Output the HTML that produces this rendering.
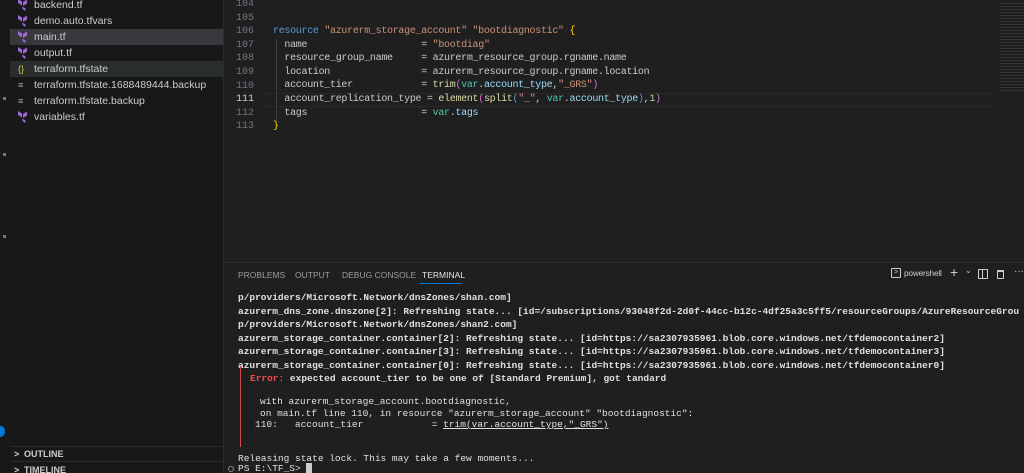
<!DOCTYPE html>
<html><head><meta charset="utf-8"><style>
*{margin:0;padding:0;box-sizing:border-box}
html,body{width:1024px;height:473px;overflow:hidden}
body{background:#1f1f1f;position:relative;font-family:"Liberation Sans",sans-serif}
.abs{position:absolute;white-space:pre}
#act{left:0;top:0;width:10px;height:473px;background:#181818}
#side{left:10px;top:0;width:214px;height:473px;background:#181818;border-right:1px solid #2b2b2b}
.f{position:absolute;left:0;width:213px;height:16px;font-size:10.5px;color:#cccccc;line-height:16px}
.f span{position:absolute;left:24px}
.f i{position:absolute;left:8px;top:2px;font-style:normal}
.tf{width:11px;height:12px}
.code{font-family:"Liberation Mono",monospace;font-size:10px;letter-spacing:-0.3px;line-height:13.6px;color:#cccccc}
.ln{color:#6e7681;text-align:right;width:30px;left:224px;letter-spacing:0}
.k{color:#569cd6}.s{color:#ce9178}.fn{color:#dcdcaa}.v{color:#9cdcfe}.t{color:#4ec9b0}.b{color:#ffd700}.b2{color:#da70d6}.n{color:#b5cea8}
.term{font-family:"Liberation Mono",monospace;font-size:9.5px;line-height:13.6px;color:#e0e0e0;font-weight:bold}
.tab{font-size:8.5px;color:#9d9d9d;top:270px}
</style></head><body>
<div id="act" class="abs"></div>
<div class="abs" style="left:-4px;top:426px;width:9px;height:11px;border-radius:50%;background:#0078d4"></div>
<div class="abs" style="left:3px;top:97px;width:3px;height:3px;background:#777"></div>
<div class="abs" style="left:3px;top:153px;width:3px;height:3px;background:#777"></div>
<div class="abs" style="left:3px;top:235px;width:3px;height:3px;background:#777"></div>
<div id="side" class="abs">
 <div class="f" style="top:-3px"><i><svg class="tf" viewBox="0 0 11 12"><path d="M0 0l4 2.5v4L0 4zM5 3l4 -2.5v4L5 7zM4.5 7.5l3 2v2.5l-3-2z" fill="#9b6ad6"/></svg></i><span>backend.tf</span></div>
 <div class="f" style="top:13px"><i><svg class="tf" viewBox="0 0 11 12"><path d="M0 0l4 2.5v4L0 4zM5 3l4 -2.5v4L5 7zM4.5 7.5l3 2v2.5l-3-2z" fill="#9b6ad6"/></svg></i><span>demo.auto.tfvars</span></div>
 <div class="f" style="top:29px;background:#37373d"><i><svg class="tf" viewBox="0 0 11 12"><path d="M0 0l4 2.5v4L0 4zM5 3l4 -2.5v4L5 7zM4.5 7.5l3 2v2.5l-3-2z" fill="#9b6ad6"/></svg></i><span>main.tf</span></div>
 <div class="f" style="top:45px"><i><svg class="tf" viewBox="0 0 11 12"><path d="M0 0l4 2.5v4L0 4zM5 3l4 -2.5v4L5 7zM4.5 7.5l3 2v2.5l-3-2z" fill="#9b6ad6"/></svg></i><span>output.tf</span></div>
 <div class="f" style="top:61px;background:#2a2d2e"><i style="color:#cbcb41;font-size:9px;top:0">{}</i><span>terraform.tfstate</span></div>
 <div class="f" style="top:77px"><i style="color:#aaa;font-size:9px;top:0">≡</i><span>terraform.tfstate.1688489444.backup</span></div>
 <div class="f" style="top:93px"><i style="color:#aaa;font-size:9px;top:0">≡</i><span>terraform.tfstate.backup</span></div>
 <div class="f" style="top:109px"><i><svg class="tf" viewBox="0 0 11 12"><path d="M0 0l4 2.5v4L0 4zM5 3l4 -2.5v4L5 7zM4.5 7.5l3 2v2.5l-3-2z" fill="#9b6ad6"/></svg></i><span>variables.tf</span></div>
 <div class="abs" style="left:0;top:446px;width:213px;height:1px;background:#2b2b2b"></div>
 <div class="f" style="top:446px;font-weight:bold;font-size:9px"><i style="left:4px;top:0;color:#ccc">&gt;</i><span style="left:14px">OUTLINE</span></div>
 <div class="abs" style="left:0;top:461px;width:213px;height:1px;background:#2b2b2b"></div>
 <div class="f" style="top:462px;font-weight:bold;font-size:9px"><i style="left:4px;top:0;color:#ccc">&gt;</i><span style="left:14px">TIMELINE</span></div>
</div>
<div class="abs" style="left:262px;top:93px;width:735px;height:14px;border-top:1px solid #282828;border-bottom:1px solid #282828"></div>
<div class="abs" style="left:1000px;top:3px;width:24px;height:90px;opacity:.4;background:repeating-linear-gradient(#555 0 1px,transparent 1px 3px)"></div>
<div class="abs code ln" style="top:-2px">104
105
106
107
108
109
110
<span style="color:#ccc">111</span>
112
113</div>
<div class="abs" style="left:276px;top:39px;width:1px;height:80px;background:#404040"></div>
<div class="abs code" style="left:273px;top:25px"><span class="k">resource</span> <span class="s">"azurerm_storage_account"</span> <span class="s">"bootdiagnostic"</span> <span class="b">{</span>
  name                    = <span class="s">"bootdiag"</span>
  resource_group_name     = azurerm_resource_group.rgname.name
  location                = azurerm_resource_group.rgname.location
  account_tier            = <span class="fn">trim</span><span class="b2">(</span><span class="t">var</span>.<span class="v">account_type</span>,<span class="s">"_GRS"</span><span class="b2">)</span>
  account_replication_type = <span class="fn">element</span><span class="b2">(</span><span class="fn">split</span><span class="k">(</span><span class="s">"_"</span>, <span class="t">var</span>.<span class="v">account_type</span><span class="k">)</span>,<span class="n">1</span><span class="b2">)</span>
  tags                    = <span class="t">var</span>.<span class="v">tags</span>
<span class="b">}</span></div>
<div class="abs" style="left:224px;top:262px;width:800px;height:1px;background:#2b2b2b"></div>
<div class="abs tab" style="left:238px">PROBLEMS</div>
<div class="abs tab" style="left:295px">OUTPUT</div>
<div class="abs tab" style="left:342px">DEBUG CONSOLE</div>
<div class="abs tab" style="left:422px;color:#e7e7e7">TERMINAL</div>
<div class="abs" style="left:420px;top:283px;width:42px;height:1px;background:#0078d4"></div>
<div class="abs" style="left:891px;top:268px;width:10px;height:10px;border:1px solid #ccc;border-radius:1px;font-size:7px;color:#ccc;line-height:8px;text-align:center">&gt;</div>
<div class="abs" style="left:904px;top:268px;font-size:8.3px;color:#ccc;letter-spacing:-0.2px">powershell</div>
<div class="abs" style="left:950px;top:264px;font-size:14px;color:#ccc">+</div>
<div class="abs" style="left:965px;top:266px;font-size:8px;color:#ccc">⌄</div>
<div class="abs" style="left:978px;top:269px;width:10px;height:10px;border:1px solid #ccc"></div>
<div class="abs" style="left:982px;top:269px;width:1px;height:10px;background:#ccc"></div>
<div class="abs" style="left:997px;top:270px;width:7px;height:9px;border:1px solid #ccc;border-top:2px solid #ccc"></div>
<div class="abs" style="left:1014px;top:266px;font-size:10px;color:#ccc">···</div>
<div class="abs term" style="left:238px;top:291px">p/providers/Microsoft.Network/dnsZones/shan.com]
azurerm_dns_zone.dnszone[2]: Refreshing state... [id=/subscriptions/93048f2d-2d0f-44cc-b12c-4df25a3c5ff5/resourceGroups/AzureResourceGrou
p/providers/Microsoft.Network/dnsZones/shan2.com]
azurerm_storage_container.container[2]: Refreshing state... [id=https://sa2307935961.blob.core.windows.net/tfdemocontainer2]
azurerm_storage_container.container[3]: Refreshing state... [id=https://sa2307935961.blob.core.windows.net/tfdemocontainer3]
azurerm_storage_container.container[0]: Refreshing state... [id=https://sa2307935961.blob.core.windows.net/tfdemocontainer0]</div>
<div class="abs" style="left:240px;top:366px;width:1px;height:81px;background:#d14a4a"></div>
<div class="abs term" style="left:250px;top:372px"><span style="color:#f14c4c">Error:</span> expected account_tier to be one of [Standard Premium], got tandard</div>
<div class="abs term" style="left:260px;top:395px;font-weight:normal">with azurerm_storage_account.bootdiagnostic,</div>
<div class="abs term" style="left:260px;top:407px;font-weight:normal">on main.tf line 110, in resource "azurerm_storage_account" "bootdiagnostic":</div>
<div class="abs term" style="left:255px;top:418px;font-weight:normal">110:   account_tier            = <u>trim(var.account_type,"_GRS")</u></div>
<div class="abs term" style="left:238px;top:452px;font-weight:normal">Releasing state lock. This may take a few moments...</div>
<div class="abs" style="left:228px;top:466px;width:6px;height:6px;border:1px solid #888;border-radius:50%"></div>
<div class="abs term" style="left:238px;top:462px;font-weight:normal">PS E:\TF_S&gt; <span style="background:#ccc">&nbsp;</span></div>
</body></html>
